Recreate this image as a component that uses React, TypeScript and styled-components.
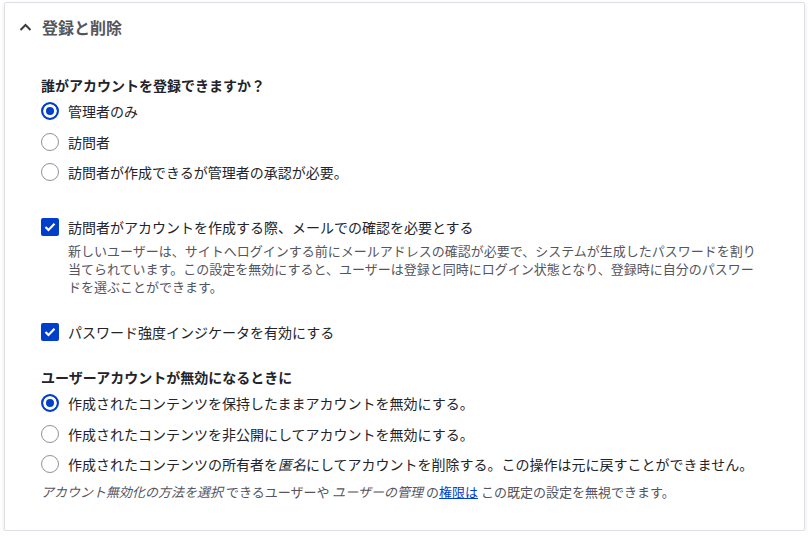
import React from 'react';
import styled, { createGlobalStyle } from 'styled-components';

const GlobalStyle = createGlobalStyle`
    body {
        margin: 0;
        background: #fff;
        font-family: "Noto Sans CJK JP", "Noto Sans", sans-serif;
        color: #232429;
    }
`;

const Page = styled.div`
    padding: 2px 5px 0 4px;
    width: 810px;
    box-sizing: border-box;
`;

const Card = styled.div`
    border: 1px solid #dedfe4;
    border-radius: 2px;
    box-shadow: 0 2px 4px rgba(0, 0, 0, 0.1);
    background: #fff;
`;

const Summary = styled.div`
    display: flex;
    align-items: center;
    gap: 10px;
    height: 48px;
    padding-left: 14px;
    color: #55565b;
    font-size: 16px;
    font-weight: 700;
`;

const Content = styled.div`
    display: flex;
    flex-direction: column;
    padding: 24px 36px 29px 36px;
`;

const Block = styled.div<{ $top?: number }>`
    display: flex;
    flex-direction: column;
    margin-top: ${p => p.$top ?? 0}px;
`;

const Legend = styled.div`
    font-size: 14px;
    font-weight: 700;
    line-height: 20px;
    margin-bottom: 1px;
`;

const Option = styled.label<{ $height?: number }>`
    display: flex;
    align-items: center;
    gap: 9px;
    height: ${p => p.$height ?? 30.5}px;
    font-size: 14px;
    color: #232429;

    em {
        font-style: italic;
    }
`;

const Radio = styled.span<{ $checked?: boolean }>`
    flex: none;
    width: 18px;
    height: 18px;
    box-sizing: border-box;
    border-radius: 50%;
    border: ${p => (p.$checked ? '2px solid #003ecc' : '1px solid #8e929c')};
    background: ${p => (p.$checked ? '#003ecc' : '#fff')};
    box-shadow: ${p => (p.$checked ? 'inset 0 0 0 3px #fff' : 'none')};
`;

const Checkbox = styled.span`
    flex: none;
    display: flex;
    align-items: center;
    justify-content: center;
    width: 18px;
    height: 18px;
    border-radius: 2px;
    background: #003ecc;
`;

const Description = styled.div<{ $indent?: number; $top?: number }>`
    margin-left: ${p => p.$indent ?? 0}px;
    margin-top: ${p => p.$top ?? 0}px;
    max-width: 692px;
    font-size: 13px;
    line-height: 18px;
    color: #545560;
    line-break: loose;

    em {
        font-style: italic;
    }

    a {
        color: #003ecc;
        text-decoration: underline;
    }
`;

const Chevron = () => (
    <svg width="13" height="8" viewBox="0 0 13 8" fill="none">
        <polyline points="1.5,7 6.5,2 11.5,7" stroke="#3b3c40" strokeWidth="2" />
    </svg>
);

const Check = () => (
    <svg width="12" height="10" viewBox="0 0 12 10" fill="none">
        <polyline points="1.5,5 4.5,8 10.5,1.8" stroke="#fff" strokeWidth="2.2" />
    </svg>
);

const App = () => {
    return (
        <Page>
            <GlobalStyle />
            <Card>
                <Summary>
                    <Chevron />
                    登録と削除
                </Summary>

                <Content>
                    <Block>
                        <Legend>誰がアカウントを登録できますか？</Legend>
                        <Option><Radio $checked />管理者のみ</Option>
                        <Option><Radio />訪問者</Option>
                        <Option><Radio />訪問者が作成できるが管理者の承認が必要。</Option>
                    </Block>

                    <Block $top={24.5}>
                        <Option $height={30}><Checkbox><Check /></Checkbox>訪問者がアカウントを作成する際、メールでの確認を必要とする</Option>
                        <Description $indent={27}>
                            新しいユーザーは、サイトへログインする前にメールアドレスの確認が必要で、システムが生成したパスワードを割り当てられています。この設定を無効にすると、ユーザーは登録と同時にログイン状態となり、登録時に自分のパスワードを選ぶことができます。
                        </Description>
                    </Block>

                    <Block $top={21}>
                        <Option $height={30}><Checkbox><Check /></Checkbox>パスワード強度インジケータを有効にする</Option>
                    </Block>

                    <Block $top={20}>
                        <Legend>ユーザーアカウントが無効になるときに</Legend>
                        <Option><Radio $checked />作成されたコンテンツを保持したままアカウントを無効にする。</Option>
                        <Option><Radio />作成されたコンテンツを非公開にしてアカウントを無効にする。</Option>
                        <Option><Radio /><span>作成されたコンテンツの所有者を<em>匿名</em>にしてアカウントを削除する。この操作は元に戻すことができません。</span></Option>
                        <Description $top={3}>
                            <em>アカウント無効化の方法を選択</em> できるユーザーや <em>ユーザーの管理</em> の<a href="#">権限は</a> この既定の設定を無視できます。
                        </Description>
                    </Block>
                </Content>
            </Card>
        </Page>
    );
};

export default App;
